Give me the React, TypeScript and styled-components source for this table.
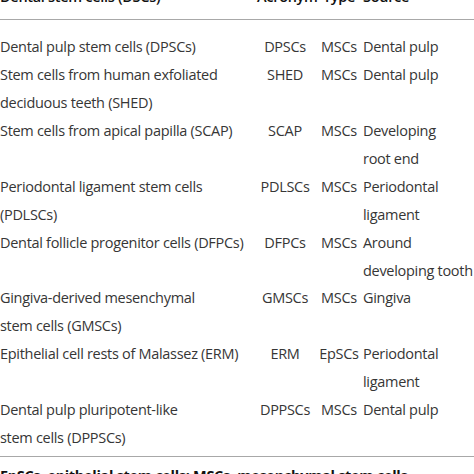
import React from "react";
import styled, { createGlobalStyle } from "styled-components";

const Global = createGlobalStyle`
  html, body { margin: 0; padding: 0; background: #fff; }
  body { overflow: hidden; width: 474px; height: 474px; }
`;

const Page = styled.div`
  width: 474px;
  height: 474px;
  overflow: hidden;
  font-family: "Open Sans", "Noto Sans", sans-serif;
  font-size: 14.5px;
  line-height: 27.9px;
  letter-spacing: -0.3px;
  color: #363636;
`;

const Table = styled.div`
  display: grid;
  grid-template-columns: 255px 60px 48px 111px;
  margin-top: -17.4px;
`;

type Align = "left" | "center";

const HeadCell = styled.div<{ $align: Align; $pad?: number }>`
  font-weight: 600;
  color: #111;
  text-align: ${(p) => p.$align};
  padding-left: ${(p) => p.$pad ?? 0}px;
  white-space: nowrap;
  padding-bottom: 8.5px;
`;

const Rule = styled.div<{ $before: number; $after: number }>`
  grid-column: 1 / -1;
  height: 1px;
  background: #a8a8a8;
  margin-top: ${(p) => p.$before}px;
  margin-bottom: ${(p) => p.$after}px;
`;

const Cell = styled.div<{ $align: Align }>`
  text-align: ${(p) => p.$align};
  white-space: pre;
`;

const Footer = styled.div`
  grid-column: 1 / -1;
  font-weight: 700;
  color: #111;
  white-space: nowrap;
  margin-top: 5px;
`;

const rows: [string, string, string, string][] = [
  ["Dental pulp stem cells (DPSCs)", "DPSCs", "MSCs", "Dental pulp"],
  ["Stem cells from human exfoliated\ndeciduous teeth (SHED)", "SHED", "MSCs", "Dental pulp"],
  ["Stem cells from apical papilla (SCAP)", "SCAP", "MSCs", "Developing\nroot end"],
  ["Periodontal ligament stem cells\n(PDLSCs)", "PDLSCs", "MSCs", "Periodontal\nligament"],
  ["Dental follicle progenitor cells (DFPCs)", "DFPCs", "MSCs", "Around\ndeveloping tooth"],
  ["Gingiva-derived mesenchymal\nstem cells (GMSCs)", "GMSCs", "MSCs", "Gingiva"],
  ["Epithelial cell rests of Malassez (ERM)", "ERM", "EpSCs", "Periodontal\nligament"],
  ["Dental pulp pluripotent-like\nstem cells (DPPSCs)", "DPPSCs", "MSCs", "Dental pulp"],
];

const aligns: Align[] = ["left", "center", "center", "left"];

export default function App() {
  return (
    <>
      <Global />
      <Page>
        <Table>
          <HeadCell $align="left">Dental stem cells (DSCs)</HeadCell>
          <HeadCell $align="left" $pad={2}>Acronym</HeadCell>
          <HeadCell $align="center">Type</HeadCell>
          <HeadCell $align="left">Source</HeadCell>
          <Rule $before={0} $after={13.3} />
          {rows.map((r, i) =>
            r.map((t, j) => (
              <Cell key={`${i}-${j}`} $align={aligns[j]}>
                {t}
              </Cell>
            ))
          )}
          <Rule $before={4} $after={0} />
          <Footer>EpSCs, epithelial stem cells; MSCs, mesenchymal stem cells</Footer>
        </Table>
      </Page>
    </>
  );
}
